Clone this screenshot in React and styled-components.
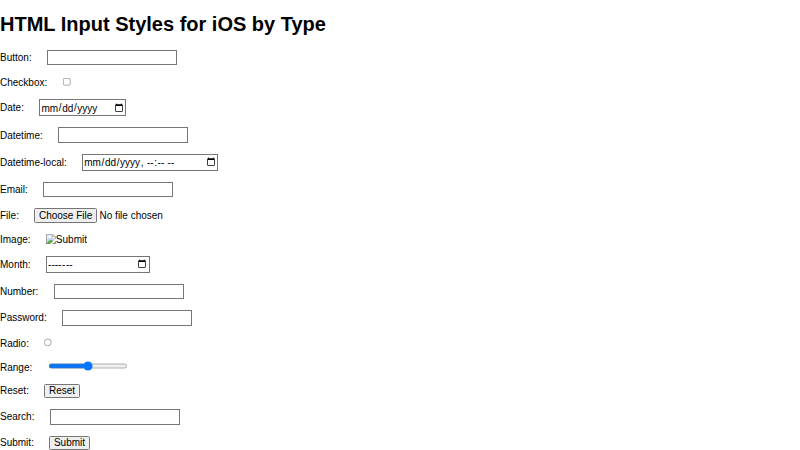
import React from "react"
import styled, { createGlobalStyle, css } from "styled-components"

const GlobalStyle = createGlobalStyle`
  body {
    margin: 0;
    background: #fff;
    color: #000;
    font-family: "Liberation Sans", Arial, sans-serif;
  }
`

// widths are in unzoomed px (page is zoomed to 0.625)
const fields = [
  { label: "Button", type: "text", width: 208 },
  { label: "Checkbox", type: "checkbox" },
  { label: "Date", type: "date", width: 139 },
  { label: "Datetime", type: "datetime", width: 208 },
  { label: "Datetime-local", type: "datetime-local", width: 218 },
  { label: "Email", type: "email", width: 208 },
  { label: "File", type: "file" },
  { label: "Image", type: "image" },
  { label: "Month", type: "month", width: 166 },
  { label: "Number", type: "number", width: 208 },
  { label: "Password", type: "password", width: 208 },
  { label: "Radio", type: "radio" },
  { label: "Range", type: "range" },
  { label: "Reset", type: "reset" },
  { label: "Search", type: "search", width: 208 },
  { label: "Submit", type: "submit" },
  { label: "Tel", type: "tel", width: 208 },
  { label: "Text", type: "text", width: 208 },
  { label: "Time", type: "time" },
  { label: "Url", type: "url", width: 208 },
  { label: "Week", type: "week" },
]

const flush = ["checkbox", "radio", "range"]

const App = () => {
  return (
    <Page>
      <GlobalStyle />
      <Title>HTML Input Styles for iOS by Type</Title>
      <form onSubmit={(e) => e.preventDefault()}>
        {fields.map((f, i) => (
          <Row key={i}>
            <Label htmlFor={"f" + i}>{f.label}:</Label>{" "}
            {f.type === "image" ? (
              <Field id={"f" + i} type="image" alt="Submit" src="submit-missing.png" />
            ) : (
              <Field
                id={"f" + i}
                type={f.type}
                $width={f.width}
                $flush={flush.includes(f.type)}
              />
            )}
          </Row>
        ))}
      </form>
    </Page>
  )
}

export default App

const Page = styled.div`
  zoom: 0.625;
  font-size: 16px;
`

const Title = styled.h1`
  font-size: 2em;
  font-weight: bold;
  margin: 0.67em 0;
`

const Row = styled.p`
  margin: 1.1em 0;
`

const Label = styled.label`
  margin-right: 20px;
`

const Field = styled.input`
  font-family: "Liberation Sans", Arial, sans-serif;
  font-size: 16px;

  ${(p) =>
    p.$width &&
    css`
      box-sizing: border-box;
      width: ${p.$width}px;
      padding-top: 2px;
      padding-bottom: 2px;
    `}

  ${(p) =>
    p.$flush &&
    css`
      margin-left: 0;
    `}
`
